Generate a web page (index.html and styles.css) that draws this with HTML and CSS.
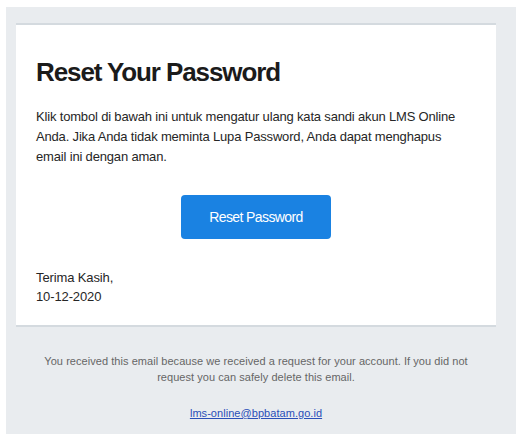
FILE: index.html
```html
<!DOCTYPE html>
<html lang="id">
<head>
<meta charset="utf-8">
<title>Reset Your Password</title>
<link rel="stylesheet" href="styles.css">
</head>
<body>
<div class="wrap">
  <div class="card">
    <h1 class="title">Reset Your Password</h1>
    <p class="text">Klik tombol di bawah ini untuk mengatur ulang kata sandi akun LMS Online Anda. Jika Anda tidak meminta Lupa Password, Anda dapat menghapus email ini dengan aman.</p>
    <div class="action"><a class="btn" href="#">Reset Password</a></div>
    <p class="sign">Terima Kasih,<br>10-12-2020</p>
  </div>
  <div class="footer">
    <p class="note">You received this email because we received a request for your account. If you did not request you can safely delete this email.</p>
    <p class="contact"><a class="mail" href="#">lms-online@bpbatam.go.id</a></p>
  </div>
</div>
</body>
</html>
```
FILE: styles.css
```css
html, body {
  margin: 0;
  padding: 0;
  background: #ffffff;
}
body {
  font-family: "Liberation Sans", Arial, Helvetica, sans-serif;
}
.wrap {
  margin: 7px 0 0 6px;
  width: 480px;
  padding: 16px 20px 13px 10px;
  background: #e9ecef;
}
.card {
  background: #ffffff;
  border-top: 2px solid #d4dadf;
  border-bottom: 2px solid #d4dadf;
  padding: 31px 20px 19px 20px;
}
.title {
  margin: 0;
  font-size: 26px;
  line-height: 32px;
  font-weight: bold;
  letter-spacing: -1.1px;
  color: #1b1b1b;
}
.text {
  margin: 19px 8px 0 0;
  font-size: 13px;
  line-height: 20px;
  letter-spacing: -0.17px;
  color: #262626;
}
.action {
  display: flex;
  justify-content: center;
  margin-top: 28px;
}
.btn {
  display: inline-block;
  height: 44px;
  line-height: 44px;
  padding: 0 28px;
  background: #1a82e2;
  border-radius: 4px;
  color: #ffffff;
  font-size: 14px;
  letter-spacing: -0.6px;
  text-decoration: none;
}
.sign {
  margin: 29px 0 0 0;
  font-size: 13px;
  line-height: 19px;
  letter-spacing: -0.12px;
  color: #262626;
}
.footer {
  text-align: center;
  color: #666666;
  font-size: 11px;
  line-height: 16px;
  letter-spacing: 0.05px;
}
.note {
  margin: 26px 14px 0 14px;
}
.contact {
  margin: 20px 0 0 0;
}
.mail {
  color: #2a4fb8;
  text-decoration: underline;
}
```
